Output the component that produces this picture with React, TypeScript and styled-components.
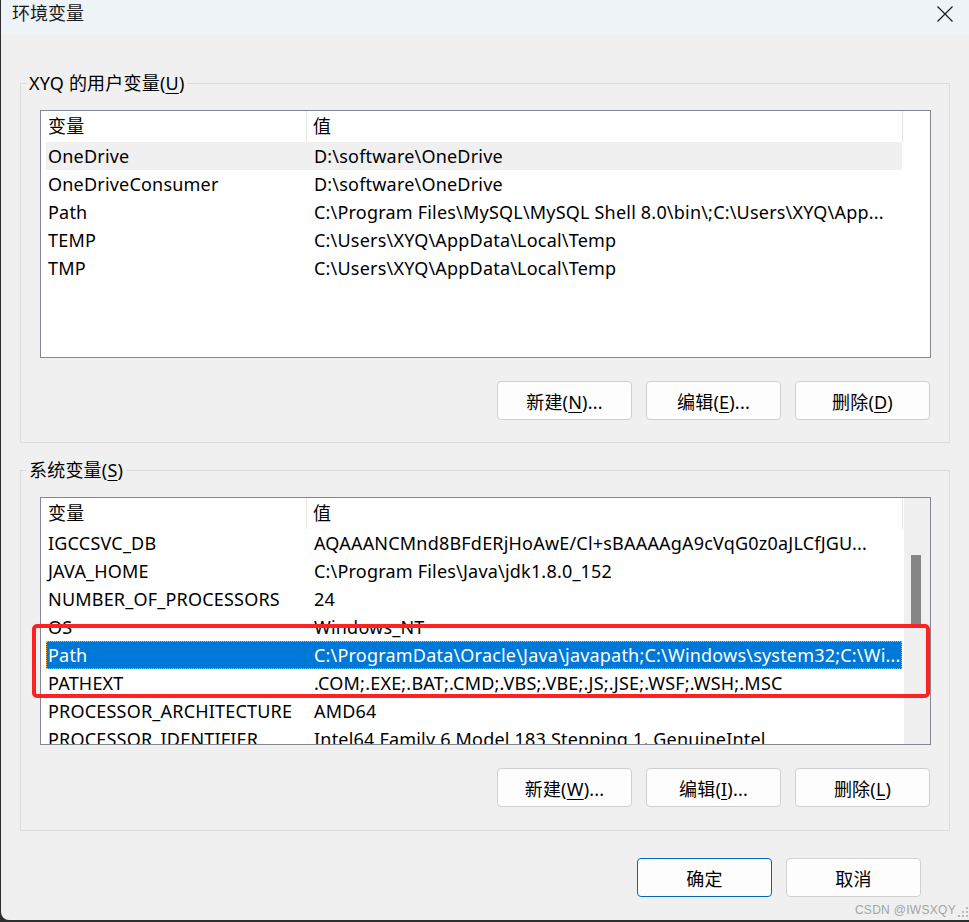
import React from "react";
import styled, { createGlobalStyle } from "styled-components";

const FONT = `"Noto Sans", "Noto Sans CJK SC", sans-serif`;

const Global = createGlobalStyle`
  html, body { margin: 0; padding: 0; background: #2e2e2e; }
  body { font-family: ${FONT}; }
  * { box-sizing: border-box; }
`;

const Window = styled.div`
  position: relative;
  width: 969px;
  height: 920px;
  margin-left: 1px;
  background: #f0f0f0;
  border-bottom-left-radius: 8px;
  overflow: hidden;
  display: flex;
  flex-direction: column;
  font-family: ${FONT};
  font-size: 18px;
  letter-spacing: 0.2px;
  color: #000;
`;

const TitleBar = styled.div`
  height: 34px;
  flex: none;
  background: #eef3f8;
  display: flex;
  justify-content: space-between;
  align-items: flex-start;
  padding: 1px 16px 0 11px;
`;

const Title = styled.div`
  font-size: 18px;
  line-height: 24px;
  letter-spacing: 0;
  color: #1a1a1a;
`;

const CloseBtn = styled.div`
  width: 18px;
  height: 18px;
  margin-top: 4px;
  display: flex;
`;

const Body = styled.div`
  flex: 1;
  display: flex;
  flex-direction: column;
  padding: 49px 0 0 19px;
`;

const GroupBox = styled.div<{ $spaced?: boolean }>`
  position: relative;
  width: 930px;
  border: 1px solid #dcdcdc;
  padding: 26px 18px ${(p) => (p.$spaced ? 23 : 22)}px 19px;
  margin-bottom: 27px;
`;

const Legend = styled.div`
  position: absolute;
  top: -13px;
  left: 5px;
  padding: 0 3px;
  background: #f0f0f0;
  line-height: 24px;
`;

const Mn = styled.span`
  text-decoration: underline;
  text-decoration-thickness: 1px;
  text-underline-offset: 3px;
`;

const ListWrap = styled.div`
  position: relative;
`;

const ListView = styled.div`
  height: 248px;
  border: 1px solid #828790;
  background: #fff;
  display: flex;
  overflow: hidden;
`;

const ListContent = styled.div`
  width: 862px;
  flex: none;
  display: flex;
  flex-direction: column;
`;

const Header = styled.div`
  height: 31px;
  flex: none;
  display: grid;
  grid-template-columns: 266px 1fr;
  border-right: 1px solid #e5e5e5;
`;

const HeaderCell = styled.div<{ $first?: boolean }>`
  line-height: 31px;
  padding-left: ${(p) => (p.$first ? 7 : 6)}px;
  border-right: ${(p) => (p.$first ? "1px solid #e5e5e5" : "none")};
  white-space: nowrap;
`;

const Rows = styled.div`
  padding-left: 5px;
  width: 861px;
`;

const Row = styled.div<{ $state?: "hover" | "selected" }>`
  height: 28px;
  display: grid;
  grid-template-columns: 266px 1fr;
  background: ${(p) =>
    p.$state === "selected" ? "#0078d7" : p.$state === "hover" ? "#f0f0f0" : "transparent"};
  color: ${(p) => (p.$state === "selected" ? "#fff" : "#000")};
  outline: ${(p) => (p.$state === "selected" ? "1px dotted #f0b050" : "none")};
  outline-offset: -1px;
`;

const Cell = styled.div`
  line-height: 28px;
  padding-left: 2px;
  white-space: nowrap;
  overflow: hidden;
  text-overflow: ellipsis;
`;

const ScrollTrack = styled.div<{ $visible?: boolean }>`
  flex: 1;
  margin-left: 1px;
  background: ${(p) => (p.$visible ? "#f0f0f0" : "#fff")};
  padding: 57px 0 0 7px;
`;

const Thumb = styled.div`
  width: 10px;
  height: 69px;
  background: #858585;
`;

const ButtonRow = styled.div<{ $pad?: number }>`
  display: flex;
  justify-content: flex-end;
  gap: 14px;
  padding-right: ${(p) => p.$pad ?? 1}px;
`;

const Button = styled.button<{ $primary?: boolean }>`
  width: 135px;
  height: 39px;
  background: #fdfdfd;
  border: 1px solid ${(p) => (p.$primary ? "#0067c0" : "#d0d0d0")};
  border-radius: 4px;
  font-family: ${FONT};
  font-size: 18px;
  letter-spacing: 0.2px;
  color: #000;
  padding: 0;
  margin: 0;
`;

const Actions = styled(ButtonRow)`
  margin-top: 23px;
`;

const Footer = styled.div`
  display: flex;
  justify-content: flex-end;
  gap: 14px;
  padding-right: 49px;
`;

const RedMark = styled.div`
  position: absolute;
  left: -8px;
  top: 127px;
  width: 898px;
  height: 74px;
  border: 4px solid #ff2222;
  border-radius: 5px;
  pointer-events: none;
`;

const Watermark = styled.div`
  position: absolute;
  right: 14px;
  bottom: 3px;
  font-family: "Liberation Sans", Arial, sans-serif;
  font-size: 12px;
  color: #a3a3a3;
  letter-spacing: 0.3px;
`;

const Grip = styled.svg`
  position: absolute;
  right: 1px;
  bottom: 2px;
`;

type Var = { name: string; value: string; state?: "hover" | "selected" };

const userVars: Var[] = [
  { name: "OneDrive", value: String.raw`D:\software\OneDrive`, state: "hover" },
  { name: "OneDriveConsumer", value: String.raw`D:\software\OneDrive` },
  { name: "Path", value: String.raw`C:\Program Files\MySQL\MySQL Shell 8.0\bin\;C:\Users\XYQ\App...` },
  { name: "TEMP", value: String.raw`C:\Users\XYQ\AppData\Local\Temp` },
  { name: "TMP", value: String.raw`C:\Users\XYQ\AppData\Local\Temp` },
];

const sysVars: Var[] = [
  { name: "IGCCSVC_DB", value: "AQAAANCMnd8BFdERjHoAwE/Cl+sBAAAAgA9cVqG0z0aJLCfJGU..." },
  { name: "JAVA_HOME", value: String.raw`C:\Program Files\Java\jdk1.8.0_152` },
  { name: "NUMBER_OF_PROCESSORS", value: "24" },
  { name: "OS", value: "Windows_NT" },
  { name: "Path", value: String.raw`C:\ProgramData\Oracle\Java\javapath;C:\Windows\system32;C:\Wi...`, state: "selected" },
  { name: "PATHEXT", value: ".COM;.EXE;.BAT;.CMD;.VBS;.VBE;.JS;.JSE;.WSF;.WSH;.MSC" },
  { name: "PROCESSOR_ARCHITECTURE", value: "AMD64" },
  { name: "PROCESSOR_IDENTIFIER", value: "Intel64 Family 6 Model 183 Stepping 1, GenuineIntel" },
];

function VarList({ vars, scroll }: { vars: Var[]; scroll?: boolean }) {
  return (
    <ListView>
      <ListContent>
        <Header>
          <HeaderCell $first>变量</HeaderCell>
          <HeaderCell>值</HeaderCell>
        </Header>
        <Rows>
          {vars.map((v) => (
            <Row key={v.name + v.value} $state={v.state}>
              <Cell>{v.name}</Cell>
              <Cell>{v.value}</Cell>
            </Row>
          ))}
        </Rows>
      </ListContent>
      <ScrollTrack $visible={scroll}>{scroll && <Thumb />}</ScrollTrack>
    </ListView>
  );
}

export default function App() {
  return (
    <>
      <Global />
      <Window>
        <TitleBar>
          <Title>环境变量</Title>
          <CloseBtn>
            <svg width="18" height="18" viewBox="0 0 18 18">
              <path d="M1.5 1.5 L16.5 16.5 M16.5 1.5 L1.5 16.5" stroke="#1c1c1c" strokeWidth="1.2" fill="none" />
            </svg>
          </CloseBtn>
        </TitleBar>
        <Body>
          <GroupBox>
            <Legend>
              XYQ 的用户变量(<Mn>U</Mn>)
            </Legend>
            <ListWrap>
              <VarList vars={userVars} />
            </ListWrap>
            <Actions>
              <Button>新建(<Mn>N</Mn>)...</Button>
              <Button>编辑(<Mn>E</Mn>)...</Button>
              <Button>删除(<Mn>D</Mn>)</Button>
            </Actions>
          </GroupBox>
          <GroupBox $spaced>
            <Legend>
              系统变量(<Mn>S</Mn>)
            </Legend>
            <ListWrap>
              <VarList vars={sysVars} scroll />
              <RedMark />
            </ListWrap>
            <Actions>
              <Button>新建(<Mn>W</Mn>)...</Button>
              <Button>编辑(<Mn>I</Mn>)...</Button>
              <Button>删除(<Mn>L</Mn>)</Button>
            </Actions>
          </GroupBox>
          <Footer>
            <Button $primary>确定</Button>
            <Button>取消</Button>
          </Footer>
        </Body>
        <Watermark>CSDN @IWSXQY</Watermark>
        <Grip width="11" height="11" viewBox="0 0 11 11">
          {[
            [9, 1], [9, 5], [5, 5], [9, 9], [5, 9], [1, 9],
          ].map(([x, y]) => (
            <rect key={`${x}-${y}`} x={x - 1} y={y - 1} width="2" height="2" fill="#b8b8b8" />
          ))}
        </Grip>
      </Window>
    </>
  );
}
